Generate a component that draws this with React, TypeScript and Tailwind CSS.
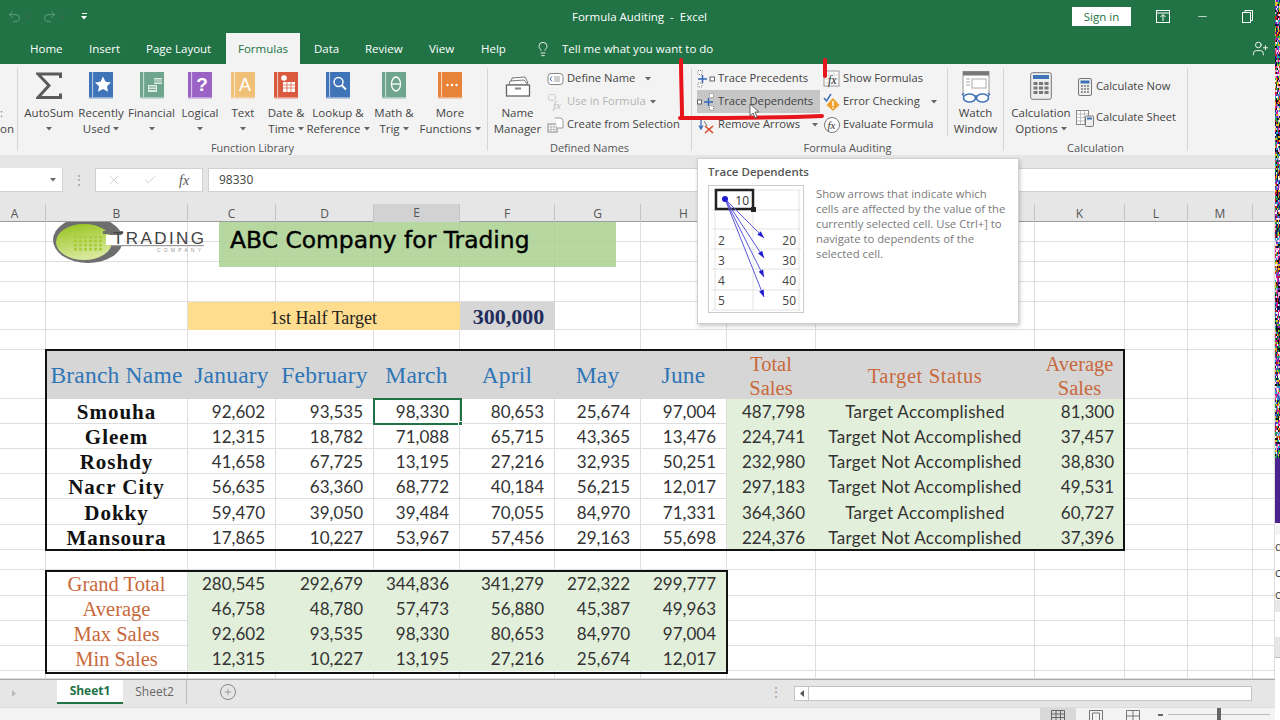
import React from "react";
import { Undo2, Redo2, Lightbulb, UserPlus, Minus, X, Check, Plus } from "lucide-react";

const COLS = "grid-cols-[46px_142px_88px_98px_86px_95px_86px_86px_89px_219px_90px_63px_65px_22px]";

const Caret = ({ className = "" }: { className?: string }) => (
  <svg width="6" height="4" viewBox="0 0 6 4" className={"inline-block " + className}>
    <path d="M0 0h6L3 3.5z" fill="#666" />
  </svg>
);

function Book({ color, children }: { color: string; children?: React.ReactNode }) {
  return (
    <svg width="24" height="28" viewBox="0 0 24 28">
      <rect x="0" y="0" width="24" height="25" fill={color} />
      <rect x="3.2" y="0" width="0.9" height="25" fill="#fff" opacity="0.75" />
      <rect x="0" y="25" width="24" height="1.6" fill={color} opacity="0.55" />
      {children}
    </svg>
  );
}

const icons: Record<string, React.ReactNode> = {
  sum: (
    <svg width="26" height="28" viewBox="0 0 26 28">
      <path d="M24.5 6V2H2l11 11.5L2 25.5h22.500v-4" fill="none" stroke="#5a5a5a" strokeWidth="3" />
    </svg>
  ),
  star: (
    <Book color="#3f74b8">
      <path d="M14 4.500l2.500 5.200 5.500.7-4 3.900 1 5.500-5-2.700-5 2.700 1-5.500-4-3.900 5.500-.7z" fill="#fff" />
    </Book>
  ),
  fin: (
    <Book color="#6fa58f">
      <rect x="8" y="13" width="9" height="7" fill="#dcece5" />
      <path d="M9 15h7M9 17.500h7" stroke="#6fa58f" />
      <rect x="14" y="6" width="8" height="6" fill="#dcece5" />
      <path d="M14 8h8M14 10h8" stroke="#6fa58f" />
    </Book>
  ),
  logic: (
    <Book color="#9b62c6">
      <text x="14" y="19" textAnchor="middle" fontSize="19" fontWeight="700" fill="#fff" fontFamily="Liberation Sans">?</text>
    </Book>
  ),
  text: (
    <Book color="#f1c077">
      <text x="14" y="19" textAnchor="middle" fontSize="18" fill="#fff" fontFamily="Liberation Sans">A</text>
    </Book>
  ),
  date: (
    <Book color="#d95a3e">
      <circle cx="10" cy="6" r="2.800" fill="#fff" />
      <rect x="9" y="10" width="12" height="10" fill="#fff" />
      <path d="M9 13h12M9 16h12M13 10v10M17 10v10" stroke="#d95a3e" strokeWidth="0.7" />
    </Book>
  ),
  look: (
    <Book color="#3f74b8">
      <circle cx="12.500" cy="10" r="4.500" fill="none" stroke="#fff" strokeWidth="1.400" />
      <path d="M16 13.500l4 4" stroke="#fff" strokeWidth="1.800" />
    </Book>
  ),
  math: (
    <Book color="#6fa58f">
      <ellipse cx="14" cy="12" rx="4.500" ry="7" fill="none" stroke="#fff" strokeWidth="1.300" />
      <path d="M9.500 12h9" stroke="#fff" strokeWidth="1.300" />
    </Book>
  ),
  more: (
    <Book color="#e8843a">
      <circle cx="9.500" cy="13" r="1.200" fill="#fff" />
      <circle cx="14" cy="13" r="1.200" fill="#fff" />
      <circle cx="18.500" cy="13" r="1.200" fill="#fff" />
    </Book>
  ),
  name: (
    <svg width="26" height="24" viewBox="0 0 26 24">
      <path d="M7 3l13-1 3 6H6z" fill="#fff" stroke="#777" />
      <path d="M5 6l14-1 4 5H4z" fill="#fff" stroke="#777" />
      <rect x="1.500" y="10" width="23" height="11" fill="#fff" stroke="#666" strokeWidth="1.300" />
      <rect x="10" y="12.500" width="6" height="2" fill="#888" />
    </svg>
  ),
  watch: (
    <svg width="30" height="34" viewBox="0 0 30 34">
      <rect x="2" y="0.500" width="26" height="24" fill="#fff" stroke="#999" />
      <rect x="2" y="0.500" width="26" height="4" fill="#777" />
      <rect x="11" y="8" width="14" height="9" fill="#fff" stroke="#aaa" />
      <path d="M5 8h4M5 11h4M5 14h4" stroke="#aaa" />
      <ellipse cx="8.500" cy="27" rx="6" ry="4" fill="#fff" stroke="#3f74b8" strokeWidth="1.600" />
      <ellipse cx="21.500" cy="27" rx="6" ry="4" fill="#fff" stroke="#3f74b8" strokeWidth="1.600" />
      <path d="M14 26h2M1 24l2-2M29 24l-2-2" stroke="#3f74b8" strokeWidth="1.500" />
    </svg>
  ),
  calc: (
    <svg width="22" height="28" viewBox="0 0 22 28">
      <rect x="0.700" y="0.700" width="20.600" height="26.600" rx="2" fill="#eee" stroke="#777" />
      <rect x="3" y="3" width="16" height="4" fill="#3f74b8" />
      {[10, 14.500, 19].map((y) => [3.500, 9, 14.500].map((x) => <rect key={x + "-" + y} x={x} y={y} width="4" height="3" fill="#777" />))}
    </svg>
  ),
};

function LargeBtn({ w, icon, l1, l2 }: { w: string; icon: string; l1: string; l2?: string }) {
  return (
    <div className={"flex flex-col items-center pt-[8px] shrink-0 " + w}>
      <div className="h-[33px] shrink-0 flex items-start justify-center">{icons[icon]}</div>
      <div className="h-[16px] shrink-0 text-[11.5px] leading-[16px] whitespace-nowrap">{l1}</div>
      <div className="h-[16px] shrink-0 text-[11.5px] leading-[16px] whitespace-nowrap flex items-center gap-[3px]">
        {l2 ? <span>{l2}</span> : null}
        <Caret />
      </div>
    </div>
  );
}

const Sep = () => <div className="w-px my-[4px] bg-[#d6d6d6] shrink-0" />;

function Group({ w, label, children }: { w: string; label: string; children: React.ReactNode }) {
  return (
    <div className={"flex flex-col shrink-0 " + w}>
      <div className="flex flex-1 min-h-0">{children}</div>
      <div className="h-[15px] shrink-0 pt-[1px] flex items-center justify-center text-[11px] text-[#555]">{label}</div>
    </div>
  );
}

const S = ({ children }: { children: React.ReactNode }) => (
  <svg width="18" height="18" viewBox="0 0 18 18" className="shrink-0">{children}</svg>
);

const smallIcons: Record<string, React.ReactNode> = {
  define: (
    <S>
      <rect x="1" y="3.500" width="15" height="11" rx="3" fill="#fff" stroke="#888" />
      <path d="M7 7h6M7 9h6M7 11h6" stroke="#888" strokeWidth="0.8" />
      <path d="M5 6.500L3 9l2 2.500" fill="none" stroke="#3f74b8" />
    </S>
  ),
  use: (
    <S>
      <rect x="1.500" y="1.500" width="7" height="6" rx="2.500" fill="none" stroke="#ccc" />
      <text x="6" y="16" fontSize="11" fontStyle="italic" fontFamily="Liberation Serif" fill="#bbb">fx</text>
    </S>
  ),
  create: (
    <S>
      <rect x="1" y="8" width="9" height="8" fill="#fff" stroke="#888" />
      <path d="M1 11h9M1 13.500h9M4 8v8M7 8v8" stroke="#aaa" strokeWidth="0.7" />
      <path d="M8 2h6l2 2v8h-6" fill="#fff" stroke="#999" />
    </S>
  ),
  prec: (
    <S>
      <rect x="1" y="0.500" width="4" height="4" fill="#fff" stroke="#666" strokeWidth="0.8" strokeDasharray="1 1" />
      <rect x="1" y="13" width="4" height="4" fill="#fff" stroke="#666" strokeWidth="0.8" strokeDasharray="1 1" />
      <rect x="13" y="7" width="4.500" height="4" fill="#fff" stroke="#555" strokeWidth="0.9" />
      <path d="M1 9h9M5.500 5v8" stroke="#3566b8" strokeWidth="1.500" />
    </S>
  ),
  dep: (
    <S>
      <rect x="0.500" y="7" width="4" height="4" fill="#fff" stroke="#555" strokeWidth="0.9" />
      <rect x="12.500" y="0.500" width="4" height="4" fill="#fff" stroke="#666" strokeWidth="0.8" strokeDasharray="1 1" />
      <rect x="12.500" y="13" width="4" height="4" fill="#fff" stroke="#666" strokeWidth="0.8" strokeDasharray="1 1" />
      <path d="M7 9h9M11.500 5v8" stroke="#3566b8" strokeWidth="1.500" />
    </S>
  ),
  remove: (
    <S>
      <path d="M4 2v10M2 9.500L4 13l2-3.500" fill="none" stroke="#3566b8" strokeWidth="1.200" />
      <path d="M7 5l3 5" stroke="#777" />
      <path d="M8 10l8 7M16 10l-8 7" stroke="#d9482b" strokeWidth="1.600" />
    </S>
  ),
  show: (
    <S>
      <rect x="1" y="1" width="15" height="15" fill="#fff" stroke="#999" />
      <path d="M1 5h15M1 9h15M1 13h15M6 1v15M11 1v15" stroke="#ccc" strokeWidth="0.7" />
      <text x="5" y="14" fontSize="12" fontStyle="italic" fontFamily="Liberation Serif" fill="#333">fx</text>
    </S>
  ),
  error: (
    <S>
      <path d="M1 5l2.500 3L8 1" fill="none" stroke="#3f74b8" strokeWidth="1.500" />
      <path d="M10 5l6.500 7-6.500 6-6.500-6z" fill="#eea12d" />
      <rect x="9.300" y="8" width="1.500" height="5" fill="#fff" />
      <rect x="9.300" y="14" width="1.500" height="1.500" fill="#fff" />
    </S>
  ),
  evalf: (
    <S>
      <circle cx="9" cy="9" r="7.500" fill="#fff" stroke="#777" />
      <text x="4.500" y="13" fontSize="11" fontStyle="italic" fontFamily="Liberation Serif" fill="#333">fx</text>
    </S>
  ),
  now: (
    <S>
      <rect x="2.500" y="0.500" width="13" height="17" rx="1.500" fill="#eee" stroke="#777" />
      <rect x="4.500" y="2.500" width="9" height="3" fill="#3f74b8" />
      <path d="M5 8h8M5 11h8M5 14h8" stroke="#777" strokeWidth="1.600" strokeDasharray="2 1" />
    </S>
  ),
  sheet: (
    <S>
      <rect x="0.500" y="1.500" width="12" height="14" fill="#fff" stroke="#888" />
      <path d="M0.500 5h12M0.500 8.500h12M0.500 12h12M4.500 1.500v14M8.500 1.500v14" stroke="#aaa" strokeWidth="0.7" />
      <rect x="9.500" y="7" width="8" height="10.500" rx="1" fill="#eee" stroke="#777" />
      <rect x="11" y="8.500" width="5" height="2" fill="#3f74b8" />
    </S>
  ),
};

function SmallItem({ icon, label, caret, dim, cls = "", gap = "gap-[2px]", caretCls = "ml-[8px]" }: { icon: string; label: string; caret?: boolean; dim?: boolean; cls?: string; gap?: string; caretCls?: string }) {
  return (
    <div className={"flex items-center h-[23px] shrink-0 whitespace-nowrap text-[11.2px] " + gap + " " + cls + (dim ? " text-[#b4b4b4]" : "")}>
      {smallIcons[icon]}
      <span>{label}</span>
      {caret ? <Caret className={caretCls} /> : null}
    </div>
  );
}

function TitleBar() {
  return (
    <div className="bg-[#217346] h-[64px] flex flex-col shrink-0 text-white">
      <div className="h-[33px] flex items-center relative">
        <div className="flex items-center pl-[7px] w-[90px] shrink-0 text-[#5f9c7e]">
          <Undo2 size={15} strokeWidth={1.600} />
          <Caret className="ml-[3px] opacity-30" />
          <Redo2 size={15} strokeWidth={1.600} className="ml-[11px]" />
          <Caret className="ml-[3px] opacity-30" />
          <div className="ml-[15px] flex flex-col gap-[2px] items-center">
            <div className="w-[5px] h-px bg-white" />
            <svg width="6" height="4" viewBox="0 0 6 4"><path d="M0 0h6L3 3.500z" fill="#fff" /></svg>
          </div>
        </div>
        <div className="ml-[482px] w-[140px] text-[11.5px] whitespace-nowrap">Formula Auditing&nbsp; -&nbsp; Excel</div>
        <div className="ml-[360px] w-[59px] h-[19px] bg-white text-[#217346] text-[11.5px] flex items-center justify-center">Sign in</div>
        <svg width="14" height="13" viewBox="0 0 14 13" className="ml-[25px]" fill="none" stroke="#fff">
          <rect x="0.500" y="0.500" width="13" height="12" />
          <path d="M0.500 3h13M7 11V5M4.500 7L7 4.500 9.500 7" />
        </svg>
        <Minus size={13} strokeWidth={1.300} className="ml-[26px]" />
        <svg width="11" height="13" viewBox="0 0 11 13" className="ml-[33px]" fill="none" stroke="#fff">
          <rect x="0.500" y="2.500" width="8" height="10" />
          <path d="M3 2.500V.5h7.500v10H8.500" />
        </svg>
      </div>
      <div className="h-[31px] flex items-stretch text-[11.5px]">
        <div className="w-[30px] shrink-0" />
        <div className="w-[59px] flex items-center shrink-0">Home</div>
        <div className="w-[57px] flex items-center shrink-0">Insert</div>
        <div className="w-[80px] flex items-center shrink-0 whitespace-nowrap">Page Layout</div>
        <div className="w-[74px] flex items-center justify-center shrink-0 bg-[#f3f3f3] text-[#217346]">Formulas</div>
        <div className="w-[14px] shrink-0" />
        <div className="w-[51px] flex items-center shrink-0">Data</div>
        <div className="w-[64px] flex items-center shrink-0">Review</div>
        <div className="w-[52px] flex items-center shrink-0">View</div>
        <div className="w-[54px] flex items-center shrink-0">Help</div>
        <div className="w-[27px] flex items-center shrink-0"><Lightbulb size={16} strokeWidth={1.300} /></div>
        <div className="flex items-center whitespace-nowrap text-[11.5px] shrink-0">Tell me what you want to do</div>
        <div className="flex-1" />
        <div className="flex items-center pr-[6px]"><UserPlus size={17} strokeWidth={1.300} /></div>
      </div>
    </div>
  );
}

function Ribbon() {
  return (
    <div className="h-[91px] bg-[#f3f3f3] flex shrink-0 text-[#444] relative">
      <div className="w-[17px] shrink-0 relative flex flex-col items-start pt-[41px] text-[11.5px] leading-[16px] overflow-hidden">
        <span className="text-[#777]">:</span>
        <span>on</span>
      </div>
      <Sep />
      <Group w="w-[469px]" label="Function Library">
        <div className="w-[5px] shrink-0" />
        <LargeBtn w="w-[52px]" icon="sum" l1="AutoSum" />
        <LargeBtn w="w-[52px]" icon="star" l1="Recently" l2="Used" />
        <LargeBtn w="w-[49px]" icon="fin" l1="Financial" />
        <LargeBtn w="w-[48px]" icon="logic" l1="Logical" />
        <LargeBtn w="w-[38px]" icon="text" l1="Text" />
        <LargeBtn w="w-[48px]" icon="date" l1="Date &" l2="Time" />
        <LargeBtn w="w-[56px]" icon="look" l1="Lookup &" l2="Reference" />
        <LargeBtn w="w-[56px]" icon="math" l1="Math &" l2="Trig" />
        <LargeBtn w="w-[56px]" icon="more" l1="More" l2="Functions" />
      </Group>
      <Sep />
      <Group w="w-[203px]" label="Defined Names">
        <div className="w-[59px] shrink-0 flex flex-col items-center pt-[11px]">
          <div className="h-[30px] shrink-0">{icons.name}</div>
          <div className="text-[11.5px] leading-[16px]">Name</div>
          <div className="text-[11.5px] leading-[16px]">Manager</div>
        </div>
        <div className="pt-[3px] flex flex-col">
          <SmallItem icon="define" label="Define Name" caret />
          <SmallItem icon="use" label="Use in Formula" dim caret caretCls="ml-[2px]" />
          <SmallItem icon="create" label="Create from Selection" />
        </div>
      </Group>
      <Sep />
      <Group w="w-[311px]" label="Formula Auditing">
        <div className="w-[255px] shrink-0 pt-[3px] pl-[5px] flex">
          <div className="w-[126px] shrink-0 flex flex-col">
            <SmallItem icon="prec" label="Trace Precedents" gap="gap-[3px]" />
            <SmallItem icon="dep" label="Trace Dependents" gap="gap-[3px]" cls="bg-[#c6c6c6] w-[123px]" />
            <SmallItem icon="remove" label="Remove Arrows" gap="gap-[3px]" caret caretCls="ml-[9px]" />
          </div>
          <div className="flex flex-col">
            <SmallItem icon="show" label="Show Formulas" />
            <SmallItem icon="error" label="Error Checking" caret caretCls="ml-[9px]" />
            <SmallItem icon="evalf" label="Evaluate Formula" />
          </div>
        </div>
        <Sep />
        <div className="w-[55px] shrink-0 flex flex-col items-center pt-[7px]">
          <div className="h-[34px] shrink-0">{icons.watch}</div>
          <div className="text-[11.5px] leading-[16px]">Watch</div>
          <div className="text-[11.5px] leading-[16px]">Window</div>
        </div>
      </Group>
      <Sep />
      <Group w="w-[183px]" label="Calculation">
        <div className="w-[74px] shrink-0 flex flex-col items-center pt-[8px]">
          <div className="h-[33px] shrink-0">{icons.calc}</div>
          <div className="text-[11.5px] leading-[16px] whitespace-nowrap">Calculation</div>
          <div className="text-[11.5px] leading-[16px] whitespace-nowrap flex items-center gap-[3px]">Options<Caret /></div>
        </div>
        <div className="pt-[7px] -ml-[2px] flex flex-col">
          <SmallItem icon="now" label="Calculate Now" cls="h-[31px]" />
          <SmallItem icon="sheet" label="Calculate Sheet" cls="h-[31px]" />
        </div>
      </Group>
      <Sep />
    </div>
  );
}

function FormulaBar() {
  return (
    <div className="h-[49px] bg-[#e6e6e6] shrink-0 pt-[13px] flex items-start text-[#444]">
      <div className="w-[63px] h-[24px] bg-white border-r border-b border-[#d0d0d0] flex items-center justify-end pr-[6px]"><Caret /></div>
      <div className="w-[32px] h-[24px] flex items-center justify-center text-[#999] text-[12px]">⋮</div>
      <div className="w-[108px] h-[24px] bg-white border border-[#d0d0d0] flex items-center pl-[11px]">
        <X size={14} strokeWidth={1.300} className="text-[#c4c4c4]" />
        <Check size={14} strokeWidth={1.300} className="text-[#c4c4c4] ml-[22px]" />
        <span className="ml-[22px] italic font-['Liberation_Serif',serif] text-[14px] text-[#555]">fx</span>
      </div>
      <div className="ml-[5px] flex-1 h-[24px] bg-white border-y border-l border-[#d0d0d0] flex items-center pl-[10px] text-[12px]">98330</div>
    </div>
  );
}

function ColumnHeader() {
  const L = ["A", "B", "C", "D", "E", "F", "G", "H", "", "", "K", "L", "M", ""];
  return (
    <div className={"grid h-[18px] bg-[#e6e6e6] shrink-0 border-b border-[#9c9c9c] " + COLS}>
      {L.map((l, i) => (
        <div
          key={i}
          className={
            "flex items-center justify-center text-[12px] text-[#555] border-r border-[#c4c4c4] " +
            (i === 0 ? "pr-[16px] " : "") +
            (l === "E" ? "bg-[#d2d2d2] border-b-2 border-b-[#217346] " : "")
          }
        >
          {l}
        </div>
      ))}
    </div>
  );
}

type C = { t?: string; c?: string };
const NUM = "justify-end pr-[10px] pt-[2px] leading-[20px] font-['Lato',sans-serif] text-[17px] text-[#333]";
const GNUM = NUM + " bg-[#e2efda] border-transparent";
const GCTR = "justify-center pt-[2px] leading-[20px] font-['Lato',sans-serif] text-[17px] tracking-[0.3px] text-[#333] bg-[#e2efda] border-transparent";
const NAME = "justify-center pt-[2px] leading-[20px] font-['Liberation_Serif',serif] font-bold text-[21px] tracking-[1px] text-[#111]";
const LBL = "justify-center pt-[2px] leading-[20px] font-['Liberation_Serif',serif] text-[20.500px] text-[#c8693c]";
const HB = "justify-center pt-[2px] leading-[30px] font-['Liberation_Serif',serif] text-[23.500px] tracking-[0.2px] text-[#2e75b6] bg-[#d6d6d6] border-transparent";
const HO = "justify-center text-center pt-[3px] font-['Liberation_Serif',serif] text-[20.500px] leading-[24px] text-[#c8693c] bg-[#d6d6d6] border-transparent whitespace-pre-line";
const HS = HO + " tracking-[0.6px]";

function Row({ h, cells }: { h: string; cells: C[] }) {
  return (
    <div className={"grid grid-rows-[100%] shrink-0 " + COLS + " " + h}>
      {cells.map((x, i) => (
        <div key={i} className={"flex items-center min-w-0 min-h-0 whitespace-nowrap border-r border-b border-[#dedede] " + (x.c ?? "")}>
          {x.t}
        </div>
      ))}
    </div>
  );
}

const blanks = (n: number): C[] => Array.from({ length: n }, () => ({}));

const dataRow = (name: string, n: string[], total: string, status: string, avg: string): C[] => [
  {},
  { t: name, c: NAME },
  ...n.map((t) => ({ t, c: NUM })),
  { t: total, c: GNUM },
  { t: status, c: GCTR },
  { t: avg, c: GNUM },
  ...blanks(3),
];

const sumRow = (name: string, n: string[]): C[] => [
  {},
  { t: name, c: LBL },
  ...n.map((t) => ({ t, c: GNUM })),
  ...blanks(6),
];

const data: [string, string, string[], string, string, string][] = [
  ["h-[25px]", "Smouha", ["92,602", "93,535", "98,330", "80,653", "25,674", "97,004"], "487,798", "Target Accomplished", "81,300"],
  ["h-[25px]", "Gleem", ["12,315", "18,782", "71,088", "65,715", "43,365", "13,476"], "224,741", "Target Not Accomplished", "37,457"],
  ["h-[25px]", "Roshdy", ["41,658", "67,725", "13,195", "27,216", "32,935", "50,251"], "232,980", "Target Not Accomplished", "38,830"],
  ["h-[25px]", "Nacr City", ["56,635", "63,360", "68,772", "40,184", "56,215", "12,017"], "297,183", "Target Not Accomplished", "49,531"],
  ["h-[26px]", "Dokky", ["59,470", "39,050", "39,484", "70,055", "84,970", "71,331"], "364,360", "Target Accomplished", "60,727"],
  ["h-[25px]", "Mansoura", ["17,865", "10,227", "53,967", "57,456", "29,163", "55,698"], "224,376", "Target Not Accomplished", "37,396"],
];

const summary: [string, string, string[]][] = [
  ["h-[26px]", "Grand Total", ["280,545", "292,679", "344,836", "341,279", "272,322", "299,777"]],
  ["h-[25px]", "Average", ["46,758", "48,780", "57,473", "56,880", "45,387", "49,963"]],
  ["h-[25px]", "Max Sales", ["92,602", "93,535", "98,330", "80,653", "84,970", "97,004"]],
  ["h-[25px]", "Min Sales", ["12,315", "10,227", "13,195", "27,216", "25,674", "12,017"]],
];

function Logo() {
  return (
    <svg className="absolute left-[46px] top-0 pointer-events-none" width="165" height="45" viewBox="46 222 165 45">
      <defs>
        <linearGradient id="lg" x1="0" y1="0" x2="0.300" y2="1">
          <stop offset="0" stopColor="#93c31a" />
          <stop offset="1" stopColor="#d8e89a" />
        </linearGradient>
      </defs>
      <ellipse cx="88" cy="240" rx="35" ry="23" fill="#6e6e6e" />
      <ellipse cx="84" cy="242" rx="28" ry="18" fill="url(#lg)" />
      <rect x="106" y="235" width="18" height="10" fill="#fff" />
      <rect x="103" y="231" width="20" height="3" fill="#6e6e6e" />
      {[236, 240, 244, 248].map((y) => [74, 79, 84, 89, 94, 99].map((x) => <rect key={x + "-" + y} x={x} y={y} width="3" height="2.500" fill="#a8cc3c" />))}
      <text x="113" y="244" fontSize="17" fontFamily="Liberation Sans" fill="#444" textLength="91">TRADING</text>
      <rect x="112" y="245" width="92" height="1.200" fill="#999" />
      <text x="157" y="252" fontSize="5" fontFamily="Liberation Sans" fill="#999" textLength="44">COMPANY</text>
    </svg>
  );
}

function Sheet() {
  return (
    <div className="relative flex-1 min-h-0 overflow-hidden bg-white">
      {["h-[20px]", "h-[20px]", "h-[20px]", "h-[20px]"].map((h, i) => (
        <Row key={i} h={h} cells={blanks(14)} />
      ))}
      <Row
        h="h-[28px]"
        cells={[
          ...blanks(2),
          { t: "1st Half Target", c: "col-span-3 justify-center pt-[5px] bg-[#ffdd8f] border-transparent font-['Liberation_Serif',serif] text-[18px] text-[#222]" },
          { t: "300,000", c: "justify-center pl-[3px] pt-[2px] bg-[#d6d6d6] border-transparent font-['Liberation_Serif',serif] font-bold text-[22px] leading-[24px] text-[#1f2c5c]" },
          ...blanks(8),
        ]}
      />
      <Row h="h-[20px]" cells={blanks(14)} />
      <Row
        h="h-[49px]"
        cells={[
          {},
          { t: "Branch Name", c: HB },
          { t: "January", c: HB },
          { t: "February", c: HB },
          { t: "March", c: HB },
          { t: "April", c: HB },
          { t: "May", c: HB },
          { t: "June", c: HB },
          { t: "Total\nSales", c: HO },
          { t: "Target Status", c: HS },
          { t: "Average\nSales", c: HO },
          ...blanks(3),
        ]}
      />
      {data.map((d) => (
        <Row key={d[1]} h={d[0]} cells={dataRow(d[1], d[2], d[3], d[4], d[5])} />
      ))}
      <Row h="h-[20px]" cells={blanks(14)} />
      {summary.map((d) => (
        <Row key={d[1]} h={d[0]} cells={sumRow(d[1], d[2])} />
      ))}
      <Row h="h-[8px]" cells={blanks(14)} />

      <Logo />
      <div className="absolute left-[219px] top-0 w-[397px] h-[45px] bg-[#a9d08e]/85 flex items-center pl-[11px] pb-[8px] font-['DejaVu_Sans',sans-serif] text-[23.400px] [-webkit-text-stroke:0.4px_black] text-black whitespace-nowrap">
        ABC Company for Trading
      </div>
      <div className="absolute left-[45px] top-[127px] w-[1080px] h-[202px] border-2 border-[#111] pointer-events-none" />
      <div className="absolute left-[45px] top-[348px] w-[683px] h-[104px] border-2 border-[#111] pointer-events-none" />
      <div className="absolute left-[373px] top-[176px] w-[89px] h-[27px] border-2 border-[#217346] pointer-events-none">
        <div className="absolute -right-[3px] -bottom-[3px] w-[5px] h-[5px] bg-[#217346] border border-white" />
      </div>
    </div>
  );
}

function TabBar() {
  return (
    <div className="h-[28px] bg-[#e6e6e6] border-t border-[#a8a8a8] shrink-0 flex items-start text-[#555]">
      <div className="w-[57px] h-full flex items-center pl-[12px]">
        <svg width="4" height="7" viewBox="0 0 4 7"><path d="M0 0l4 3.500L0 7z" fill="#bbb" /></svg>
      </div>
      <div className="w-[66px] h-[24px] bg-white border-b-2 border-[#217346] flex items-center justify-center text-[12px] font-bold text-[#217346] font-['Open_Sans',sans-serif]">Sheet1</div>
      <div className="w-[64px] h-[24px] flex items-center justify-center text-[12px] text-[#666] border-r border-[#bbb]">Sheet2</div>
      <div className="ml-[33px] mt-[4px] w-[16px] h-[16px] rounded-full border border-[#888] flex items-center justify-center">
        <Plus size={10} strokeWidth={1.500} className="text-[#777]" />
      </div>
      <div className="ml-[534px] mt-[3px] text-[#999] text-[12px]">⋮</div>
      <div className="ml-[12px] mt-[6px] w-[458px] h-[15px] bg-white border border-[#c4c4c4] flex">
        <div className="w-[14px] h-full border-r border-[#c4c4c4] flex items-center justify-center">
          <svg width="4" height="7" viewBox="0 0 4 7"><path d="M4 0L0 3.500 4 7z" fill="#555" /></svg>
        </div>
      </div>
    </div>
  );
}

function StatusBar() {
  return (
    <div className="h-[13px] shrink-0 bg-[#f3f3f3] border-t border-[#dcdcdc] flex items-start justify-end pr-[5px] overflow-hidden">
      <div className="w-[36px] h-[13px] bg-[#d8d8d8] flex justify-center pt-[2px]">
        <svg width="14" height="11" viewBox="0 0 14 11" fill="none" stroke="#666"><path d="M.5.5h13v10H.5zM.5 4h13M.5 7.500h13M5 .5v10M9.500.5v10" /></svg>
      </div>
      <div className="w-[40px] h-[13px] flex justify-center pt-[2px]">
        <svg width="14" height="11" viewBox="0 0 14 11" fill="none" stroke="#777"><path d="M.5.5h13v10H.5zM3.500 3h7v8h-7z" /></svg>
      </div>
      <div className="w-[34px] h-[13px] flex justify-center pt-[2px]">
        <svg width="14" height="11" viewBox="0 0 14 11" fill="none" stroke="#777"><path d="M.5 11V.5h13V11M.5 6h13M7 .5V11" /></svg>
      </div>
      <div className="w-[5px] h-[2px] bg-[#666] mt-[6px] ml-[8px]" />
      <div className="ml-[5px] w-[102px] h-px bg-[#bbb] mt-[6px] relative">
        <div className="absolute left-[49px] -top-[6px] w-[4px] h-[14px] bg-[#666]" />
      </div>
    </div>
  );
}

function NoiseStrip() {
  const colors = ["#1a1a6e", "#d91a8c", "#1fa34a", "#f5f5f5", "#111", "#6a2bb8", "#e0c020", "#22a0c8", "#c82020", "#f0a0d0"];
  const rects: React.ReactNode[] = [];
  let seed = 7;
  for (let y = 0; y < 229; y++) {
    for (let x = 0; x < 5; x++) {
      seed = (seed * 1103515245 + 12345) & 0x7fffffff;
      rects.push(<rect key={y * 5 + x} x={x} y={y * 2} width="1" height="2" fill={colors[(seed >> 8) % colors.length]} />);
    }
  }
  return (
    <svg width="5" height="458" viewBox="0 0 5 458" className="block shrink-0">
      {rects}
    </svg>
  );
}

function RightStrip() {
  return (
    <div className="w-[5px] h-full shrink-0 flex flex-col overflow-hidden bg-white text-[12px] text-[#444] font-['Open_Sans',sans-serif]">
      <NoiseStrip />
      <div className="h-[65px] bg-[#4a2390] shrink-0" />
      <div className="h-[12px] shrink-0 bg-[#f4f4f4]" />
      <div className="h-[26px] shrink-0 leading-[24px]">d</div>
      <div className="h-[24px] shrink-0 leading-[24px]">c</div>
      <div className="h-[15px] shrink-0 leading-[20px]">o</div>
      <div className="h-[12px] shrink-0 bg-[#e8e8e8]" />
      <div className="h-[25px] shrink-0 bg-white" />
      <div className="h-[20px] shrink-0 bg-[#e6e6e6]" />
      <div className="flex-1 bg-white border-t border-[#bbb]" />
    </div>
  );
}

function Tooltip() {
  const lines = [
    "Show arrows that indicate which",
    "cells are affected by the value of the",
    "currently selected cell. Use Ctrl+] to",
    "navigate to dependents of the",
    "selected cell.",
  ];
  const rows: [string, string, number][] = [["2", "20", 245], ["3", "30", 265], ["4", "40", 285], ["5", "50", 305]];
  const ends: [number, number][] = [[763, 238], [763, 258], [763, 277], [763, 297]];
  return (
    <div className="absolute left-[697px] top-[158px] w-[322px] h-[166px] bg-white border border-[#d0d0d0] shadow-[1px_2px_4px_rgba(0,0,0,0.22)] pl-[10px] pt-[5px]">
      <div className="text-[11.500px] font-semibold text-[#555] leading-[16px]">Trace Dependents</div>
      <div className="flex mt-[5px]">
        <svg width="96" height="128" viewBox="707 185 96 128" className="shrink-0">
          <rect x="707.500" y="185.500" width="95" height="127" fill="#fff" stroke="#ccc" />
          <path d="M710 190h90M710 210h90M710 229h90M710 249h90M710 269h90M710 290h90M710 310h90M714 190v120M752 190v120M798 190v120" stroke="#ddd" strokeWidth="0.800" fill="none" />
          <text x="748" y="205" textAnchor="end" fontSize="12" fontFamily="Open Sans" fill="#333">10</text>
          {rows.map((r) => (
            <g key={r[0]}>
              <text x="717" y={r[2]} fontSize="12" fontFamily="Open Sans" fill="#444">{r[0]}</text>
              <text x="795" y={r[2]} textAnchor="end" fontSize="12" fontFamily="Open Sans" fill="#444">{r[1]}</text>
            </g>
          ))}
          <rect x="715" y="190" width="37" height="19" fill="none" stroke="#222" strokeWidth="2.500" />
          <rect x="750" y="207" width="5" height="5" fill="#222" />
          {ends.map((e) => (
            <line key={e[1]} x1="724" y1="199" x2={e[0]} y2={e[1]} stroke="#5a55d8" strokeWidth="1" />
          ))}
          {ends.map((e) => {
            const a = Math.atan2(e[1] - 199, e[0] - 724);
            const bx = e[0] - 7 * Math.cos(a);
            const by = e[1] - 7 * Math.sin(a);
            const nx = -Math.sin(a) * 2.5;
            const ny = Math.cos(a) * 2.5;
            return <polygon key={e[1]} points={`${e[0]},${e[1]} ${bx + nx},${by + ny} ${bx - nx},${by - ny}`} fill="#1f1ad0" />;
          })}
          <circle cx="724" cy="199" r="3" fill="#1f1ad0" />
        </svg>
        <div className="ml-[12px] pt-[1px] text-[11.300px] leading-[15px] text-[#7a7a7a] whitespace-nowrap">
          {lines.map((l) => (
            <div key={l}>{l}</div>
          ))}
        </div>
      </div>
    </div>
  );
}

function Marks() {
  return (
    <>
      <svg className="absolute left-[672px] top-[58px] pointer-events-none" width="160" height="68" viewBox="672 58 160 68">
        <path d="M681 60c0 20 1 40 1 58M680 118c50 0 95 0 142-2M825 60v16" fill="none" stroke="#e8141c" strokeWidth="4" strokeLinecap="round" />
      </svg>
      <svg className="absolute left-[749px] top-[103px] pointer-events-none" width="12" height="16" viewBox="0 0 12 16">
        <path d="M1 1v12l3-3 2 5 2-1-2-5h4z" fill="#fff" stroke="#555" strokeWidth="0.900" />
      </svg>
    </>
  );
}

export default function App() {
  return (
    <div className="relative w-[1280px] h-[720px] overflow-hidden flex font-['Open_Sans',sans-serif]">
      <div className="w-[1275px] h-full flex flex-col shrink-0">
        <TitleBar />
        <Ribbon />
        <FormulaBar />
        <ColumnHeader />
        <Sheet />
        <TabBar />
        <StatusBar />
      </div>
      <RightStrip />
      <Tooltip />
      <Marks />
    </div>
  );
}
